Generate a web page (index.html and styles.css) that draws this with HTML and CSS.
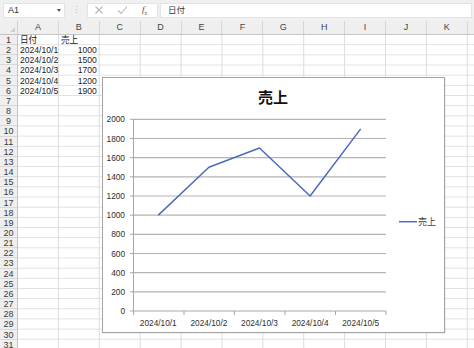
FILE: index.html
```html
<!DOCTYPE html>
<html lang="ja">
<head>
<meta charset="utf-8">
<title>Sheet</title>
<link rel="stylesheet" href="styles.css">
</head>
<body>
<div class="app">
  <div class="fbar">
    <div class="namebox"><span>A1</span><span class="dd"></span></div>
    <div class="grip">⋮</div>
    <div class="fnbox">
      <svg class="ico" width="10" height="10" viewBox="0 0 10 10"><path d="M1.5 1.5 L8.5 8.5 M8.5 1.5 L1.5 8.5" stroke="#b8b8b8" stroke-width="1.1" fill="none"/></svg>
      <svg class="ico" width="11" height="10" viewBox="0 0 11 10"><path d="M1 5.5 L4 8.5 L10 1.5" stroke="#b8b8b8" stroke-width="1.1" fill="none"/></svg>
      <span class="fx">f<sub>x</sub></span>
    </div>
    <div class="input">日付</div>
  </div>
  <div class="sheet">
    <div class="corner"><span class="tri"></span></div>
    <div class="colhead">
      <div>A</div><div>B</div><div>C</div><div>D</div><div>E</div><div>F</div><div>G</div><div>H</div><div>I</div><div>J</div><div>K</div>
    </div>
    <div class="rowhead">
      <div>1</div><div>2</div><div>3</div><div>4</div><div>5</div><div>6</div><div>7</div><div>8</div><div>9</div><div>10</div>
      <div>11</div><div>12</div><div>13</div><div>14</div><div>15</div><div>16</div><div>17</div><div>18</div><div>19</div><div>20</div>
      <div>21</div><div>22</div><div>23</div><div>24</div><div>25</div><div>26</div><div>27</div><div>28</div><div>29</div><div>30</div>
      <div>31</div>
    </div>
    <div class="cells">
      <div class="data">
        <div>日付</div><div>売上</div>
        <div>2024/10/1</div><div class="n">1000</div>
        <div>2024/10/2</div><div class="n">1500</div>
        <div>2024/10/3</div><div class="n">1700</div>
        <div>2024/10/4</div><div class="n">1200</div>
        <div>2024/10/5</div><div class="n">1900</div>
      </div>
      <div class="chart">
        <svg width="341" height="254" viewBox="0 0 341 254">
          <text x="170" y="25" class="title" text-anchor="middle">売上</text>
          <g stroke="#b3b3b3" stroke-width="1.2">
            <line x1="30" x2="283" y1="41.3" y2="41.3"/>
            <line x1="30" x2="283" y1="60.5" y2="60.5"/>
            <line x1="30" x2="283" y1="79.6" y2="79.6"/>
            <line x1="30" x2="283" y1="98.8" y2="98.8"/>
            <line x1="30" x2="283" y1="118" y2="118"/>
            <line x1="30" x2="283" y1="137.2" y2="137.2"/>
            <line x1="30" x2="283" y1="156.3" y2="156.3"/>
            <line x1="30" x2="283" y1="175.5" y2="175.5"/>
            <line x1="30" x2="283" y1="194.7" y2="194.7"/>
            <line x1="30" x2="283" y1="213.8" y2="213.8"/>
          </g>
          <g stroke="#a8a8a8" stroke-width="1">
            <line x1="30.5" x2="30.5" y1="41.3" y2="233"/>
            <line x1="27" x2="283" y1="233" y2="233"/>
            <line x1="27" x2="30" y1="41.3" y2="41.3"/>
            <line x1="27" x2="30" y1="60.5" y2="60.5"/>
            <line x1="27" x2="30" y1="79.6" y2="79.6"/>
            <line x1="27" x2="30" y1="98.8" y2="98.8"/>
            <line x1="27" x2="30" y1="118" y2="118"/>
            <line x1="27" x2="30" y1="137.2" y2="137.2"/>
            <line x1="27" x2="30" y1="156.3" y2="156.3"/>
            <line x1="27" x2="30" y1="175.5" y2="175.5"/>
            <line x1="27" x2="30" y1="194.7" y2="194.7"/>
            <line x1="27" x2="30" y1="213.8" y2="213.8"/>
            <line x1="30.5" x2="30.5" y1="233" y2="237"/>
            <line x1="81" x2="81" y1="233" y2="237"/>
            <line x1="131.5" x2="131.5" y1="233" y2="237"/>
            <line x1="182" x2="182" y1="233" y2="237"/>
            <line x1="232.5" x2="232.5" y1="233" y2="237"/>
            <line x1="283" x2="283" y1="233" y2="237"/>
          </g>
          <g class="lbl" text-anchor="end">
            <text x="22" y="44.3">2000</text>
            <text x="22" y="63.5">1800</text>
            <text x="22" y="82.6">1600</text>
            <text x="22" y="101.8">1400</text>
            <text x="22" y="121">1200</text>
            <text x="22" y="140.2">1000</text>
            <text x="22" y="159.3">800</text>
            <text x="22" y="178.5">600</text>
            <text x="22" y="197.7">400</text>
            <text x="22" y="216.8">200</text>
            <text x="22" y="236">0</text>
          </g>
          <g class="lbl" text-anchor="middle">
            <text x="55.3" y="248">2024/10/1</text>
            <text x="105.9" y="248">2024/10/2</text>
            <text x="156.5" y="248">2024/10/3</text>
            <text x="207.1" y="248">2024/10/4</text>
            <text x="257.7" y="248">2024/10/5</text>
          </g>
          <polyline points="55.3,137.15 105.9,89.22 156.5,70.05 207.1,117.98 257.7,50.88" fill="none" stroke="#4a6cbb" stroke-width="1.5" stroke-linejoin="round"/>
          <line x1="296" x2="314" y1="143.7" y2="143.7" stroke="#4a6cbb" stroke-width="1.5"/>
          <text x="315" y="147" class="leg">売上</text>
        </svg>
      </div>
    </div>
  </div>
</div>
</body>
</html>
```

FILE: styles.css
```css
html, body {
  margin: 0;
  padding: 0;
}
body {
  width: 474px;
  height: 348px;
  overflow: hidden;
  background: #fff;
  font-family: "Liberation Sans", "Noto Sans CJK JP", sans-serif;
  color: #222;
}
.app {
  display: flex;
  flex-direction: column;
  width: 474px;
  height: 348px;
}
.fbar {
  display: flex;
  align-items: center;
  height: 21px;
  flex: 0 0 21px;
  box-sizing: border-box;
  padding: 0 2px 1px 3px;
  background: #f0f0f0;
}
.namebox {
  width: 62px;
  height: 15px;
  box-sizing: border-box;
  background: #fff;
  border: 1px solid #e4e4e4;
  display: flex;
  align-items: center;
  justify-content: space-between;
  padding: 0 3px 0 4px;
  font-size: 9px;
  color: #333;
}
.dd {
  width: 0;
  height: 0;
  border-left: 2.5px solid transparent;
  border-right: 2.5px solid transparent;
  border-top: 3px solid #555;
}
.grip {
  width: 22px;
  text-align: center;
  font-size: 9px;
  color: #b5b5b5;
  line-height: 15px;
}
.fnbox {
  width: 71px;
  height: 15px;
  box-sizing: border-box;
  background: #fff;
  border: 1px solid #e4e4e4;
  display: flex;
  align-items: center;
  padding-left: 6px;
  gap: 13px;
}
.fx {
  font-family: "Liberation Serif", serif;
  font-style: italic;
  font-size: 9px;
  color: #444;
  margin-left: 1px;
}
.fx sub {
  font-size: 6px;
}
.input {
  flex: 1;
  height: 15px;
  box-sizing: border-box;
  margin-left: 2px;
  background: #fff;
  border: 1px solid #e4e4e4;
  padding-left: 7px;
  font-size: 8.5px;
  line-height: 13px;
  color: #333;
}
.sheet {
  flex: 1;
  display: grid;
  grid-template-columns: 18px 456px;
  grid-template-rows: 14px 1fr;
  overflow: hidden;
}
.corner {
  background: #efefef;
  border-right: 1px solid #cfcfcf;
  border-bottom: 1px solid #c4c4c4;
  box-sizing: border-box;
  position: relative;
}
.tri {
  position: absolute;
  right: 2px;
  bottom: 2px;
  width: 0;
  height: 0;
  border-left: 5px solid transparent;
  border-bottom: 5px solid #cfcfcf;
}
.colhead {
  display: grid;
  grid-template-columns: repeat(11, 40.9px);
  background: #efefef;
  border-bottom: 1px solid #c4c4c4;
  box-sizing: border-box;
}
.colhead div {
  text-align: center;
  font-size: 9px;
  line-height: 13px;
  color: #444;
  border-right: 1px solid #d6d6d6;
  box-sizing: border-box;
}
.rowhead {
  background: #efefef;
  border-right: 1px solid #c4c4c4;
  box-sizing: border-box;
}
.rowhead div {
  height: 10.17px;
  box-sizing: border-box;
  border-bottom: 1px solid #d8d8d8;
  text-align: center;
  font-size: 9px;
  line-height: 10px;
  color: #3a3a3a;
}
.cells {
  position: relative;
  background-image:
    linear-gradient(to right, transparent calc(100% - 1px), #dcdcdc 0),
    linear-gradient(to bottom, transparent calc(100% - 1px), #e0e0e0 0);
  background-size: 40.9px 100%, 100% 10.17px;
}
.data {
  display: grid;
  grid-template-columns: 40.9px 40.9px;
  grid-auto-rows: 10.17px;
  font-size: 8.6px;
  line-height: 10px;
  color: #222;
}
.data div {
  padding: 0 3px 0 2px;
  white-space: nowrap;
}
.data .n {
  text-align: right;
}
.chart {
  position: absolute;
  left: 84px;
  top: 42px;
  width: 343px;
  height: 256px;
  box-sizing: border-box;
  border: 1px solid #a3a3a3;
  background: #fff;
  box-shadow: 1px 1px 0 rgba(0,0,0,0.06);
}
.chart svg {
  display: block;
}
.title {
  font-family: "Noto Sans CJK JP", sans-serif;
  font-weight: bold;
  font-size: 15px;
  fill: #111;
}
.lbl {
  font-family: "Liberation Sans", sans-serif;
  font-size: 8.3px;
  fill: #2e2e2e;
}
.leg {
  font-family: "Noto Sans CJK JP", sans-serif;
  font-size: 9px;
  fill: #404040;
}
```
